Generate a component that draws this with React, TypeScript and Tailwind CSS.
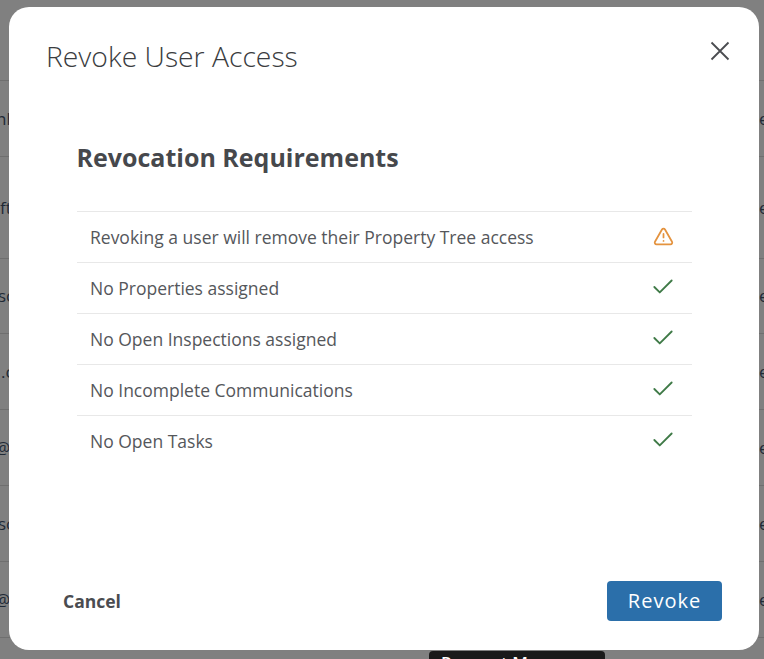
import { Check, TriangleAlert } from "lucide-react";

const bgRows = [
  { height: "h-[76px]", left: "nh", offset: "-ml-[4px]" },
  { height: "h-[102px]", left: "ft", offset: "ml-0" },
  { height: "h-[75px]", left: "so", offset: "-ml-[2px]" },
  { height: "h-[76px]", left: ".c", offset: "ml-[1px]" },
  { height: "h-[76px]", left: "@", offset: "-ml-[5px]" },
  { height: "h-[76px]", left: "so", offset: "-ml-[2px]" },
  { height: "h-[76px]", left: "@", offset: "-ml-[5px]" },
];

const requirements = [
  { label: "Revoking a user will remove their Property Tree access", warn: true },
  { label: "No Properties assigned" },
  { label: "No Open Inspections assigned" },
  { label: "No Incomplete Communications" },
  { label: "No Open Tasks" },
];

export default function App() {
  return (
    <div className="relative h-[659px] w-[764px] overflow-hidden bg-[#808080] font-['Open_Sans',sans-serif]">
      <div className="h-[81px] border-b border-[#6f6f6f]" />
      {bgRows.map((row, index) => (
        <div
          key={index}
          className={`${row.height} flex items-center justify-between border-b border-[#6f6f6f] text-[17px] text-[#1f2a36]`}
        >
          <span className="flex w-[9px] overflow-hidden whitespace-nowrap">
            <span className={`${row.offset} shrink-0`}>{row.left}</span>
          </span>
          <span className="block w-[5px] overflow-hidden whitespace-nowrap">e</span>
        </div>
      ))}

      <div className="absolute left-[429px] top-[651px] h-[40px] w-[176px] rounded-[4px] bg-[#1a1a1a] pl-[12px] pt-[1px] text-[17px] font-semibold leading-[22px] text-white">
        Request More
      </div>

      <div className="absolute left-[9px] top-[7px] flex h-[643px] w-[750px] flex-col rounded-[20px] bg-white text-[#4a4c50]">
        <div className="flex items-start justify-between pl-[37px] pr-[29px] pt-[30px]">
          <h1 className="text-[28.3px] font-light leading-[38px] text-[#3a3c40]">Revoke User Access</h1>
          <svg viewBox="0 0 20 20" className="mt-[4px] h-[20px] w-[20px] text-[#4a4c50]" fill="none" stroke="currentColor" strokeWidth={1.8}>
            <path d="M1.5 1.5 18.5 18.5M18.5 1.5 1.5 18.5" />
          </svg>
        </div>

        <div className="flex-1 pl-[68px] pr-[67px] pt-[65px]">
          <h2 className="-ml-[0.5px] text-[25px] font-bold leading-[34px] text-[#46484c]">Revocation Requirements</h2>
          <ul className="mt-[37px] w-[615px]">
            {requirements.map((item) => (
              <li
                key={item.label}
                className="flex h-[51px] items-center justify-between border-t border-[#e8e8e8] pl-[13px] pr-[15.5px] text-[17.5px] text-[#55575b]"
              >
                <span>{item.label}</span>
                {item.warn ? (
                  <span className="flex w-[27px] justify-center pb-[2px]">
                    <TriangleAlert className="h-[21px] w-[21px] text-[#e4933f]" strokeWidth={2} />
                  </span>
                ) : (
                  <span className="flex w-[27px] justify-center pb-[2px]">
                    <Check className="h-[26px] w-[26px] text-[#3f7a47]" strokeWidth={1.7} />
                  </span>
                )}
              </li>
            ))}
          </ul>
        </div>

        <div className="flex items-center justify-between pb-[29px] pl-[54px] pr-[37px]">
          <button className="text-[17.5px] font-bold text-[#4a4c50]">Cancel</button>
          <button className="h-[40px] w-[115px] rounded-[4px] bg-[#2b6faa] text-[20px] font-medium tracking-[1px] text-white">
            Revoke
          </button>
        </div>
      </div>
    </div>
  );
}
